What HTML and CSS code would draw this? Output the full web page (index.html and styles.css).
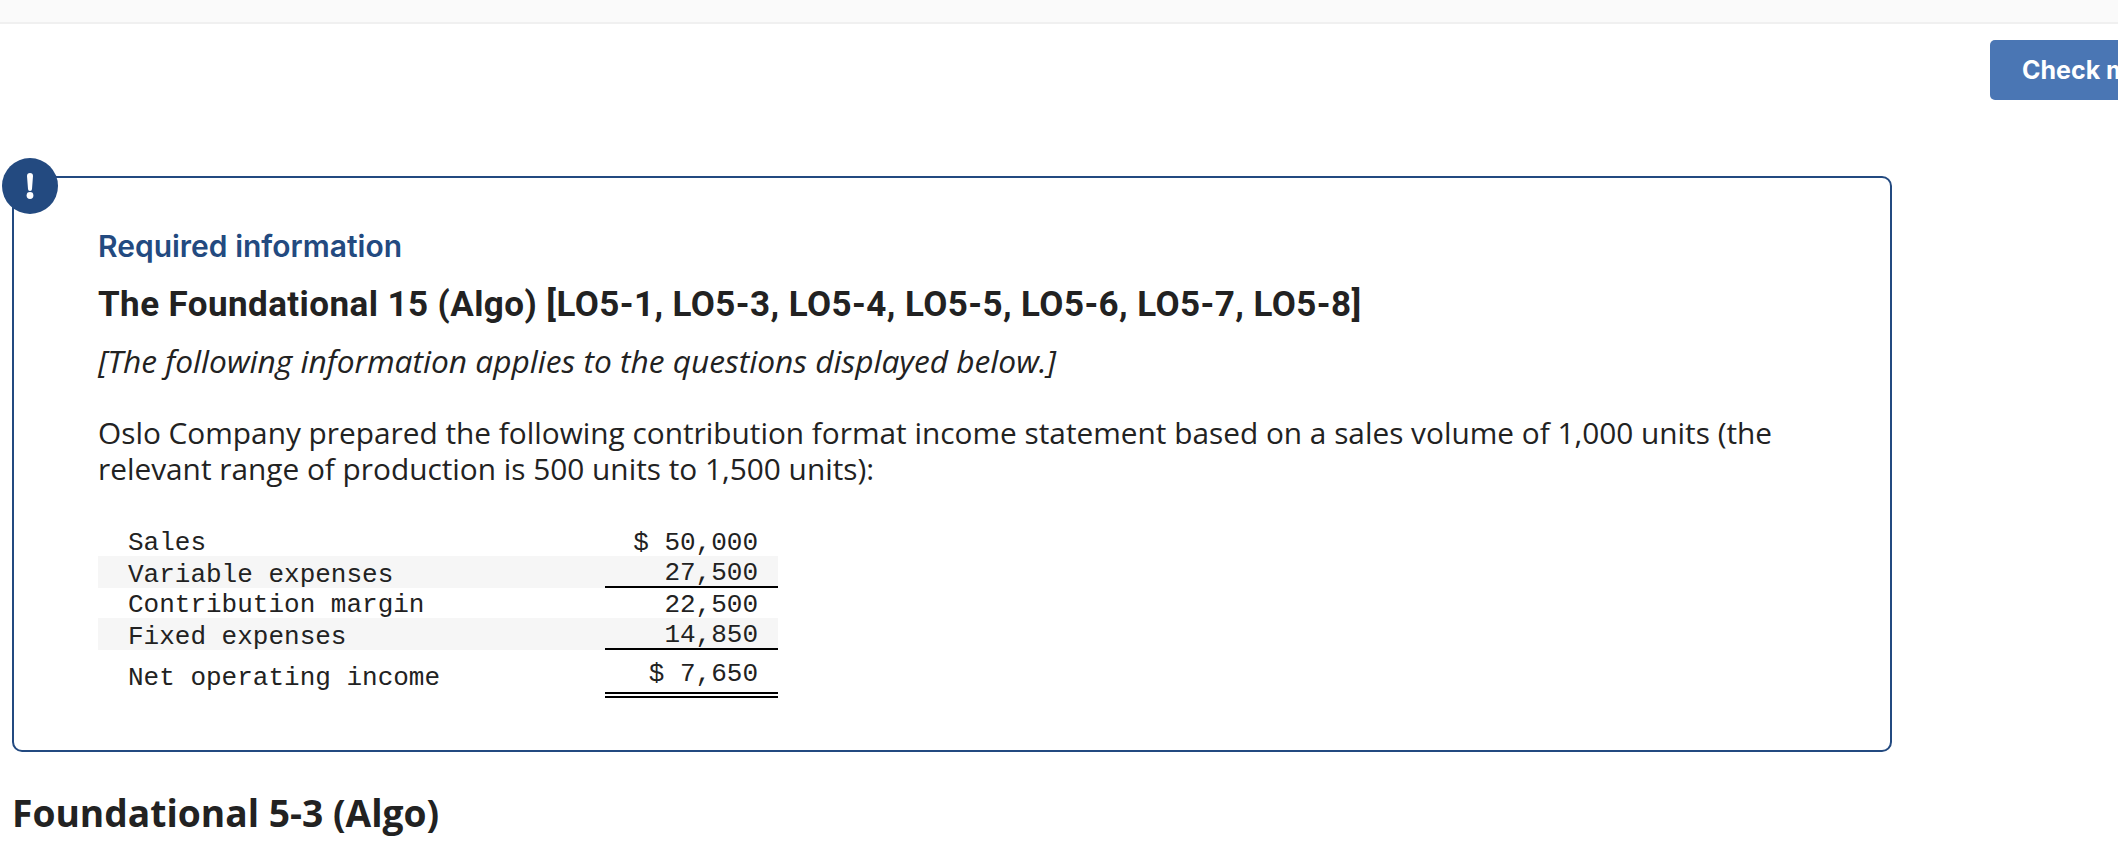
FILE: index.html
```html
<!DOCTYPE html>
<html lang="en">
<head>
  <meta charset="UTF-8">
  <title>Foundational 5-3 (Algo)</title>
  <link rel="stylesheet" href="styles.css">
</head>
<body>
  <div class="topbar"></div>

  <div class="actions">
    <button class="check-btn" type="button">Check my work</button>
  </div>

  <div class="main">
    <!-- Required information box -->
    <section class="info-box">
      <span class="alert-badge">
        <svg width="8" height="26" viewBox="0 0 8 26">
          <path d="M1 3a3 3 0 0 1 6 0L6 16a2 2 0 0 1-4 0z" fill="#fff"/>
          <circle cx="4" cy="22.5" r="3.4" fill="#fff"/>
        </svg>
      </span>
      <h3 class="info-label">Required information</h3>
      <h2 class="info-title">The Foundational 15 (Algo) [LO5-1, LO5-3, LO5-4, LO5-5, LO5-6, LO5-7, LO5-8]</h2>
      <p class="info-note">[The following information applies to the questions displayed below.]</p>
      <p class="info-text">Oslo Company prepared the following contribution format income statement based on a sales volume of 1,000 units (the relevant range of production is 500 units to 1,500 units):</p>

      <table class="statement">
        <tbody>
          <tr class="row-a">
            <td class="name">Sales</td>
            <td class="amount">$ 50,000</td>
          </tr>
          <tr class="row-b shaded">
            <td class="name">Variable expenses</td>
            <td class="amount line">27,500</td>
          </tr>
          <tr class="row-c">
            <td class="name">Contribution margin</td>
            <td class="amount">22,500</td>
          </tr>
          <tr class="row-b shaded">
            <td class="name">Fixed expenses</td>
            <td class="amount line">14,850</td>
          </tr>
          <tr class="total">
            <td class="name">Net operating income</td>
            <td class="amount double">$ 7,650</td>
          </tr>
        </tbody>
      </table>
    </section>

    <h1 class="question-title">Foundational 5-3 (Algo)</h1>
  </div>
</body>
</html>
```

FILE: styles.css
```css
/* Basic page styling */
html, body {
  height: 860px;
  overflow: hidden;
}

body {
  margin: 0;
  padding: 0;
  background-color: #ffffff;
  color: #222;
  font-family: "Open Sans", sans-serif;
}

.topbar {
  height: 22px;
  background-color: #fafafa;
  border-bottom: 2px solid #f0f0f0;
}

.actions {
  display: flex;
  height: 60px;
  margin-top: 16px;
  padding-left: 1990px;
}

.check-btn {
  flex: none;
  width: 240px;
  height: 60px;
  padding: 0 0 0 32px;
  border: none;
  border-radius: 5px;
  background-color: #4a76b4;
  color: #fff;
  font-family: Inter, sans-serif;
  font-size: 25px;
  font-weight: 700;
  text-align: left;
  white-space: nowrap;
}

.main {
  padding: 76px 0 0 12px;
}

.info-box {
  position: relative;
  box-sizing: border-box;
  width: 1880px;
  height: 576px;
  padding: 50px 84px 0 84px;
  border: 2px solid #234a80;
  border-radius: 10px;
}

.alert-badge {
  position: absolute;
  left: -12px;
  top: -20px;
  display: flex;
  align-items: center;
  justify-content: center;
  width: 56px;
  height: 56px;
  border-radius: 50%;
  background-color: #234a80;
}

.info-label {
  margin: 0;
  color: #234a80;
  font-family: Inter, sans-serif;
  font-size: 30px;
  font-weight: 600;
  line-height: 36px;
}

.info-title {
  margin: 21px 0 0;
  font-family: Roboto, sans-serif;
  font-size: 35px;
  font-weight: 700;
  letter-spacing: 0.42px;
  line-height: 40px;
}

.info-note {
  margin: 16px 0 0;
  font-size: 31.7px;
  font-style: italic;
  line-height: 40px;
}

.info-text {
  margin: 34px 0 0;
  font-size: 29.8px;
  line-height: 36px;
}

.statement {
  width: 680px;
  margin-top: 38px;
  border-collapse: separate;
  border-spacing: 0;
  font-family: "Liberation Mono", monospace;
  font-size: 26px;
  line-height: 26px;
}

.statement td {
  box-sizing: border-box;
  padding: 0;
  vertical-align: bottom;
}

.statement .row-a td {
  height: 31px;
}

.statement .row-b td {
  height: 32px;
}

.statement .row-c td {
  height: 30px;
}

.statement .total td {
  height: 48px;
}

.statement .name {
  padding-left: 30px;
}

.statement .amount {
  width: 173px;
  padding-right: 20px;
  text-align: right;
  white-space: pre;
}

.statement .shaded {
  background-color: #f6f6f6;
}

.statement .line {
  border-bottom: 2px solid #000;
}

.statement .total .name {
  padding-bottom: 7px;
}

.statement .double {
  padding-bottom: 5px;
  border-bottom: 6px double #000;
}

.question-title {
  margin: 39px 0 0 0;
  font-size: 37.2px;
  font-weight: 700;
  line-height: 44px;
}
```
